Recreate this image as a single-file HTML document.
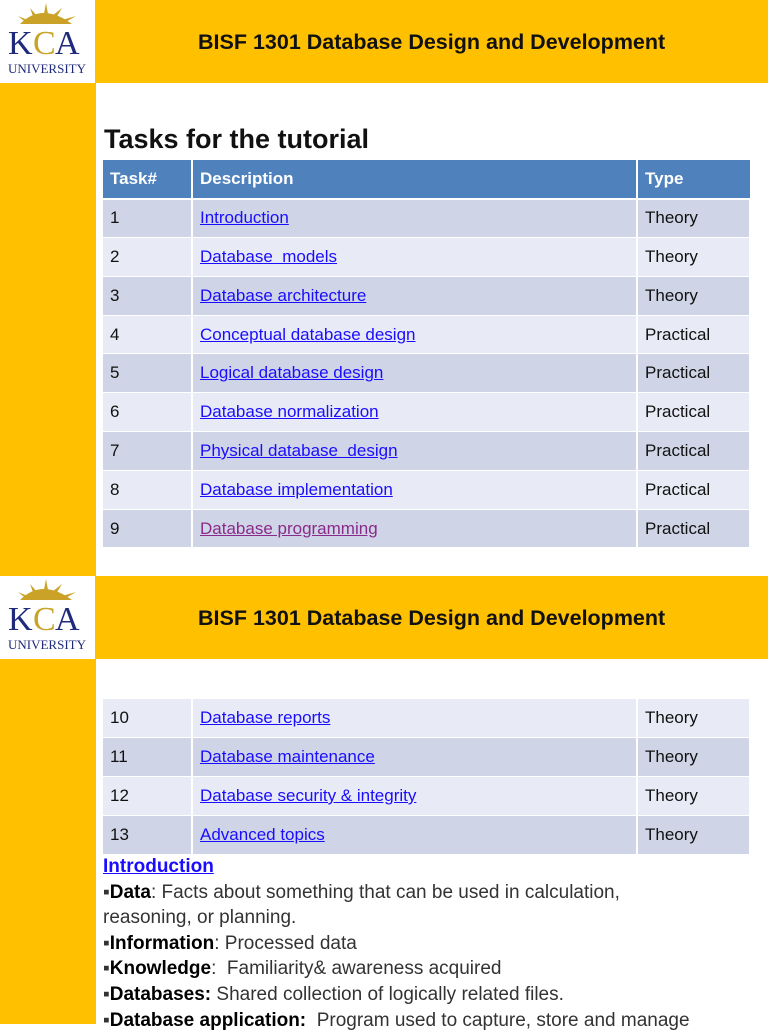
<!DOCTYPE html>
<html><head><meta charset="utf-8"><style>
*{margin:0;padding:0;box-sizing:border-box}
body{width:768px;height:1024px;overflow:hidden;background:#fff;position:relative;font-family:"Liberation Sans",sans-serif}
.strip{position:absolute;left:0;top:0;width:96px;height:1024px;background:#ffc000}
.hdr{position:absolute;left:96px;width:672px;height:83px;background:#ffc000;font-weight:bold;font-size:21.5px;color:#111;padding-left:102px;line-height:85px}
.logo{position:absolute;left:0;width:95px;height:83px;background:#fff}
table{position:absolute;left:103px;width:648px;border-collapse:collapse;font-size:17px;color:#111}
td,th{height:38.8px;padding:0 7px;text-align:left;border:1px solid #fff;border-width:0 2px 1px 0}
th{background:#4f81bd;color:#fff;font-weight:bold;border-bottom:2px solid #fff}
tr.a td{background:#cfd5e6}tr.b td{background:#e8ebf5}
a{color:#1a0dff;text-decoration:underline}
a.v{color:#8a2a8a}
h1{position:absolute;left:104px;top:124px;font-size:27px;font-weight:bold;color:#111}
.txt{position:absolute;left:103px;top:854px;width:600px;font-size:19px;color:#333;line-height:25.6px}
.txt b{color:#000}
</style></head><body>
<div class="strip"></div>
<div class="logo" style="top:0"><svg width="95" height="83" viewBox="0 0 95 83">
<g fill="#c9a227"><path d="M20 24 Q42 2 72 24 Z"/><path d="M46 3 L48 14 L44 14Z"/><path d="M30 8 L38 17 L34 19Z"/><path d="M62 8 L56 18 L52 16Z"/><path d="M18 16 L30 21 L28 24Z"/><path d="M76 16 L64 23 L62 20Z"/></g>
<text x="8" y="54" font-family="Liberation Serif,serif" font-size="34" fill="#1f2a7a">K</text>
<text x="33" y="54" font-family="Liberation Serif,serif" font-size="34" fill="#c9a227">C</text>
<text x="55" y="54" font-family="Liberation Serif,serif" font-size="34" fill="#1f2a7a">A</text>
<text x="47" y="73" text-anchor="middle" font-family="Liberation Serif,serif" font-size="13" fill="#1f2a7a">UNIVERSITY</text></svg></div>
<div class="hdr" style="top:0">BISF 1301 Database Design and Development</div>
<h1>Tasks for the tutorial</h1>
<table style="top:160px"><colgroup><col style="width:89px"><col style="width:445px"><col></colgroup>
<tr><th>Task#</th><th>Description</th><th style="border-right:0">Type</th></tr>
<tr class="a"><td>1</td><td><a>Introduction</a></td><td>Theory</td></tr>
<tr class="b"><td>2</td><td><a>Database&nbsp; models</a></td><td>Theory</td></tr>
<tr class="a"><td>3</td><td><a>Database architecture</a></td><td>Theory</td></tr>
<tr class="b"><td>4</td><td><a>Conceptual database design</a></td><td>Practical</td></tr>
<tr class="a"><td>5</td><td><a>Logical database design</a></td><td>Practical</td></tr>
<tr class="b"><td>6</td><td><a>Database normalization</a></td><td>Practical</td></tr>
<tr class="a"><td>7</td><td><a>Physical database&nbsp; design</a></td><td>Practical</td></tr>
<tr class="b"><td>8</td><td><a>Database implementation</a></td><td>Practical</td></tr>
<tr class="a"><td>9</td><td><a class="v">Database programming</a></td><td>Practical</td></tr>
</table>
<div class="logo" style="top:576px"><svg width="95" height="83" viewBox="0 0 95 83">
<g fill="#c9a227"><path d="M20 24 Q42 2 72 24 Z"/><path d="M46 3 L48 14 L44 14Z"/><path d="M30 8 L38 17 L34 19Z"/><path d="M62 8 L56 18 L52 16Z"/><path d="M18 16 L30 21 L28 24Z"/><path d="M76 16 L64 23 L62 20Z"/></g>
<text x="8" y="54" font-family="Liberation Serif,serif" font-size="34" fill="#1f2a7a">K</text>
<text x="33" y="54" font-family="Liberation Serif,serif" font-size="34" fill="#c9a227">C</text>
<text x="55" y="54" font-family="Liberation Serif,serif" font-size="34" fill="#1f2a7a">A</text>
<text x="47" y="73" text-anchor="middle" font-family="Liberation Serif,serif" font-size="13" fill="#1f2a7a">UNIVERSITY</text></svg></div>
<div class="hdr" style="top:576px">BISF 1301 Database Design and Development</div>
<table style="top:699px"><colgroup><col style="width:89px"><col style="width:445px"><col></colgroup>
<tr class="b"><td>10</td><td><a>Database reports</a></td><td>Theory</td></tr>
<tr class="a"><td>11</td><td><a>Database maintenance</a></td><td>Theory</td></tr>
<tr class="b"><td>12</td><td><a>Database security &amp; integrity</a></td><td>Theory</td></tr>
<tr class="a"><td>13</td><td><a>Advanced topics</a></td><td>Theory</td></tr>
</table>
<div class="txt">
<div style="font-weight:bold;font-size:19px"><a>Introduction</a></div>
<div>▪<b>Data</b>: Facts about something that can be used in calculation,<br>reasoning, or planning.</div>
<div>▪<b>Information</b>: Processed data</div>
<div>▪<b>Knowledge</b>:&nbsp; Familiarity&amp; awareness acquired</div>
<div>▪<b>Databases:</b> Shared collection of logically related files.</div>
<div style="white-space:nowrap">▪<b>Database application:</b>&nbsp; Program used to capture, store and manage</div>
</div>
</body></html>
